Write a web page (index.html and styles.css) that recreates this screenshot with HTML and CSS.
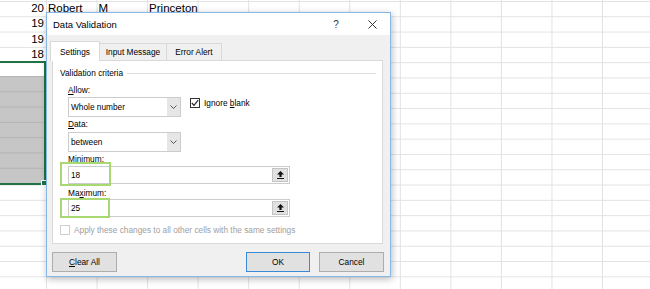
FILE: index.html
```html
<!DOCTYPE html>
<html lang="en">
<head>
  <meta charset="UTF-8" />
  <title>Data Validation</title>
  <link rel="stylesheet" href="styles.css">
</head>
<body>

  <!-- worksheet behind the dialog -->
  <div class="sheet">
    <div class="cell num">20</div>
    <div class="cell">Robert</div>
    <div class="cell">M</div>
    <div class="cell">Princeton</div>
    <div class="cell num">19</div>
    <div class="cell num">19</div>
    <div class="cell num">18</div>
    <div class="selection">
      <div class="sel-fill"></div>
      <div class="fill-handle"></div>
    </div>
  </div>

  <!-- dialog -->
  <div class="dialog">
    <div class="titlebar">
      <span class="title">Data Validation</span>
      <span class="help">?</span>
      <svg class="close" width="9" height="9" viewBox="0 0 9 9">
        <path d="M0.5 0.5 L8.5 8.5 M8.5 0.5 L0.5 8.5" stroke="#333" stroke-width="1" fill="none"/>
      </svg>
    </div>

    <div class="body">
      <div class="tabs">
        <div class="tab active">Settings</div>
        <div class="tab tab-input">Input Message</div>
        <div class="tab tab-error">Error Alert</div>
      </div>

      <div class="panel">
        <div class="group-title">Validation criteria</div>

        <div class="criteria">
          <div class="label"><u>A</u>llow:</div>
          <div class="row">
            <div class="select">
              <span class="value">Whole number</span>
              <span class="drop">
                <svg width="7" height="4" viewBox="0 0 7 4"><path d="M0.5 0.5 L3.5 3.5 L6.5 0.5" stroke="#555" fill="none"/></svg>
              </span>
            </div>
            <div class="check">
              <span class="box">
                <svg width="8" height="8" viewBox="0 0 8 8"><path d="M0.8 4 L3 6.3 L7.2 1.2" stroke="#222" stroke-width="1.1" fill="none"/></svg>
              </span>
              <span>Ignore <u>b</u>lank</span>
            </div>
          </div>

          <div class="label"><u>D</u>ata:</div>
          <div class="row row-data">
            <div class="select">
              <span class="value">between</span>
              <span class="drop">
                <svg width="7" height="4" viewBox="0 0 7 4"><path d="M0.5 0.5 L3.5 3.5 L6.5 0.5" stroke="#555" fill="none"/></svg>
              </span>
            </div>
          </div>

          <div class="label">Minimum:</div>
          <div class="field field-min">
            <span class="value">18</span>
            <span class="ref-btn">
              <svg width="7" height="8" viewBox="0 0 7 8"><path d="M3.5 0 L7 3.5 H4.6 V6 H2.4 V3.5 H0 Z" fill="#111"/><rect x="0" y="7" width="7" height="1" fill="#111"/></svg>
            </span>
          </div>

          <div class="label label-max">Ma<u>x</u>imum:</div>
          <div class="field field-max">
            <span class="value">25</span>
            <span class="ref-btn">
              <svg width="7" height="8" viewBox="0 0 7 8"><path d="M3.5 0 L7 3.5 H4.6 V6 H2.4 V3.5 H0 Z" fill="#111"/><rect x="0" y="7" width="7" height="1" fill="#111"/></svg>
            </span>
          </div>
        </div>

        <div class="apply">
          <span class="box disabled"></span>
          <span>Apply these changes to all other cells with the same settings</span>
        </div>
      </div>

      <div class="buttons">
        <div class="btn"><u>C</u>lear All</div>
        <div class="btn btn-ok">OK</div>
        <div class="btn btn-cancel">Cancel</div>
      </div>
    </div>
  </div>

</body>
</html>
```

FILE: styles.css
```css
body {
  margin: 0;
  height: 289px;
  overflow: hidden;
  position: relative;
  background: #fff;
  font-family: 'Liberation Sans', Arial, sans-serif;
}

/* ---------- worksheet ---------- */

.sheet {
  display: grid;
  grid-template-columns: 46px repeat(12, 50.55px);
  grid-template-rows: repeat(19, 15.3px);
  padding-top: 1px;
  height: 289px;
  box-sizing: border-box;
  font-size: 11.5px;
  color: #000;
  background-image:
    linear-gradient(to right, #e2e2e2 1px, transparent 1px),
    linear-gradient(to bottom, #e2e2e2 1px, transparent 1px);
  background-size: 50.55px 100%, 100% 15.3px;
  background-position: 46px 0, 0 1px;
}

.cell {
  line-height: 15.3px;
  padding: 0 2px;
  white-space: nowrap;
}

.cell.num {
  grid-column: 1;
  text-align: right;
}

.selection {
  grid-column: 1;
  grid-row: 5 / span 8;
  position: relative;
  border: 2px solid #217346;
  border-left: none;
  margin-top: -1px;
}

.sel-fill {
  margin-top: 13.3px;
  height: calc(100% - 13.3px);
  background-color: #c6c6c6;
  background-image: linear-gradient(to bottom, #b3b3b3 1px, transparent 1px);
  background-size: 100% 15.3px;
}

.fill-handle {
  position: absolute;
  right: -3px;
  bottom: -3px;
  width: 4px;
  height: 4px;
  background: #217346;
  border: 1px solid #fff;
}

/* ---------- dialog ---------- */

.dialog {
  position: absolute;
  left: 46px;
  top: 12px;
  width: 343px;
  height: 263px;
  border: 1px solid #86b7e6;
  background: #f0f0f0;
  box-shadow: 1px 2px 7px rgba(0, 0, 0, 0.28);
  display: flex;
  flex-direction: column;
  font-size: 8.3px;
  color: #000;
}

.titlebar {
  height: 22px;
  background: #fff;
  display: flex;
  align-items: center;
  padding-left: 6px;
  font-size: 9.5px;
}

.help {
  margin-left: auto;
  width: 12px;
  text-align: center;
  font-size: 10px;
  color: #333;
}

.close {
  margin-left: 26px;
  margin-right: 13px;
}

.body {
  flex: 1;
  display: flex;
  flex-direction: column;
  padding: 6px 7px 0 5px;
}

.tabs {
  display: flex;
  align-items: flex-end;
  height: 19px;
  margin-left: -2px;
  position: relative;
  z-index: 1;
}

.tab {
  height: 17px;
  box-sizing: border-box;
  border: 1px solid #d9d9d9;
  border-left: none;
  border-bottom: none;
  display: flex;
  align-items: center;
  justify-content: center;
}

.tab.active {
  width: 50px;
  height: 20px;
  margin-bottom: -1px;
  background: #fff;
  border-left: 1px solid #d9d9d9;
}

.tab-input { width: 67px; }
.tab-error { width: 55px; }

.panel {
  height: 184px;
  box-sizing: border-box;
  background: #fff;
  border: 1px solid #d9d9d9;
  padding: 7px 6px 0 7px;
}

.group-title {
  display: flex;
  align-items: center;
  height: 10px;
}

.group-title::after {
  content: "";
  flex: 1;
  height: 1px;
  margin-left: 4px;
  background: #dcdcdc;
}

.criteria { padding-left: 8px; }

.label {
  height: 10px;
  line-height: 10px;
  margin-top: 2px;
}

.criteria .label:first-child { margin-top: 7px; }
.label-max { margin-top: 4px; }

.row {
  display: flex;
  align-items: flex-start;
  margin-top: 2px;
}

.row-data { margin-top: 3px; }

.select {
  width: 113px;
  height: 20px;
  box-sizing: border-box;
  border: 1px solid #cccccc;
  display: flex;
}

.select .value,
.field .value {
  flex: 1;
  padding-left: 2px;
  display: flex;
  align-items: center;
}

.select .drop {
  width: 13px;
  background: #e6e6e6;
  display: flex;
  align-items: center;
  justify-content: center;
}

.check {
  display: flex;
  align-items: center;
  gap: 4px;
  margin-left: 9px;
  margin-top: 1px;
}

.box {
  width: 10px;
  height: 10px;
  box-sizing: border-box;
  border: 1px solid #333;
  background: #fff;
  display: flex;
  align-items: center;
  justify-content: center;
}

.box.disabled { border-color: #cfcfcf; }

.field {
  position: relative;
  width: 222px;
  height: 18px;
  box-sizing: border-box;
  border: 1px solid #cccccc;
  margin-top: 2px;
  display: flex;
}

.field-max { margin-top: 1px; }

.ref-btn {
  width: 14px;
  margin: 1px;
  background: #e1e1e1;
  border: 1px solid #c4c4c4;
  display: flex;
  align-items: center;
  justify-content: center;
}

/* green call-out boxes drawn on the screenshot */
.field::before {
  content: "";
  position: absolute;
  border: 2px solid #a8d872;
  box-sizing: border-box;
}

.field-min::before {
  left: -9px;
  top: -5px;
  width: 51px;
  height: 24px;
}

.field-max::before {
  left: -9px;
  top: -2px;
  width: 50px;
  height: 20px;
}

.apply {
  display: flex;
  align-items: center;
  gap: 4px;
  height: 10px;
  margin-top: 8px;
  color: #a0a0a0;
}

.buttons {
  display: flex;
  margin-top: 8px;
  margin-right: -1px;
}

.btn {
  width: 65px;
  height: 20px;
  box-sizing: border-box;
  border: 1px solid #adadad;
  background: #e1e1e1;
  display: flex;
  align-items: center;
  justify-content: center;
}

.btn-ok {
  width: 64px;
  margin-left: auto;
  border-color: #3b8ad8;
}

.btn-cancel { margin-left: 9px; }
```
